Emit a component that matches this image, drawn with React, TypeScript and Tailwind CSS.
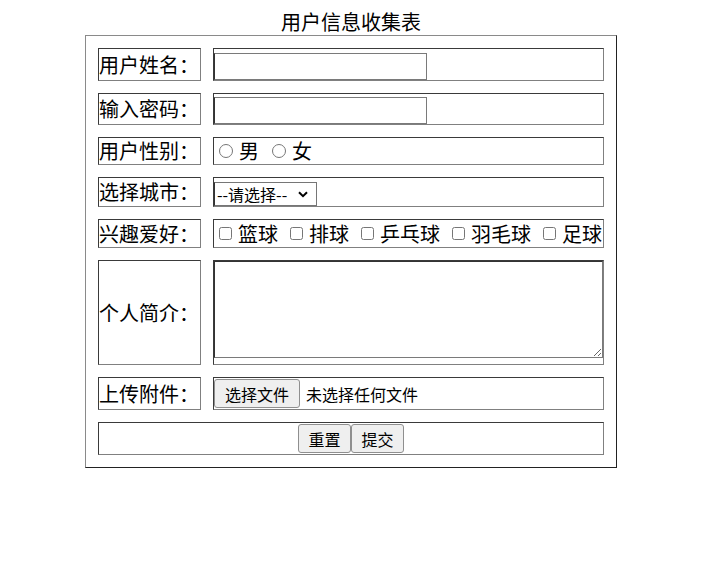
import { useState } from 'react';

const cell =
  'border border-t-[#3a3a3a] border-l-[#3a3a3a] border-r-[#808080] border-b-[#808080]';

const field =
  'border border-t-[#7a7a7a] border-l-[#333] border-r-[#7a7a7a] border-b-[#7a7a7a] outline-none';

const hobbies = ['篮球', '排球', '乒乓球', '羽毛球', '足球'];

function Label({ text }: { text: string }) {
  return <div className={`${cell} flex items-center text-[20px] leading-[26px]`}>{text}</div>;
}

export default function App() {
  const [city, setCity] = useState('');

  return (
    <div className="min-h-screen bg-white pt-2 text-black font-['Noto_Sans_CJK_SC','Microsoft_YaHei',sans-serif]">
      <div className="mx-auto w-[532px]">
        {/* caption */}
        <div className="h-[27px] text-center text-[20px] leading-[27px]">用户信息收集表</div>

        {/* the "table" */}
        <form className="grid grid-cols-[103px_391px] grid-rows-[33px_32px_28px_30px_29px_105px_33px_33px] gap-3 border border-t-[#8a8a8a] border-l-[#8a8a8a] border-r-[#222] border-b-[#222] p-3">
          <Label text="用户姓名：" />
          <div className={`${cell} flex items-end`}>
            <input type="text" className={`${field} h-[27px] w-[213px] px-1 text-[16px]`} />
          </div>

          <Label text="输入密码：" />
          <div className={`${cell} flex items-end`}>
            <input type="password" className={`${field} h-[27px] w-[213px] px-1 text-[16px]`} />
          </div>

          <Label text="用户性别：" />
          <div className={`${cell} flex items-center gap-[8px] text-[20px] leading-[26px]`}>
            {['男', '女'].map((s) => (
              <label key={s} className="flex items-center">
                <input type="radio" name="sex" className="ml-[5px] mr-[6px] h-[14px] w-[14px]" />
                {s}
              </label>
            ))}
          </div>

          <Label text="选择城市：" />
          <div className={`${cell} flex items-end`}>
            <div className="relative">
              <select
                value={city}
                onChange={(e) => setCity(e.target.value)}
                className="h-[24px] w-[103px] appearance-none border border-[#767676] border-l-[#333] bg-white pl-[2px] pr-[22px] text-[16px] leading-[20px] outline-none"
              >
                <option value="">--请选择--</option>
                <option value="bj">北京</option>
                <option value="sh">上海</option>
                <option value="gz">广州</option>
              </select>
              {/* dropdown chevron */}
              <svg
                className="pointer-events-none absolute right-[9px] top-[9px]"
                width="10"
                height="7"
                viewBox="0 0 10 7"
                fill="none"
              >
                <path d="M1 1.2 5 5.2 9 1.2" stroke="#000" strokeWidth="2" />
              </svg>
            </div>
          </div>

          <Label text="兴趣爱好：" />
          <div className={`${cell} flex items-center gap-[7px] text-[20px] leading-[26px] whitespace-nowrap`}>
            {hobbies.map((h) => (
              <label key={h} className="flex items-center">
                <input type="checkbox" className="ml-[5px] mr-[6px] h-[13px] w-[13px]" />
                {h}
              </label>
            ))}
          </div>

          <Label text="个人简介：" />
          <div className={`${cell} flex items-start`}>
            <textarea
              className={`${field} h-[97px] w-full border-t-[#333] border-r-[#6a6a6a] p-[2px] text-[16px]`}
            />
          </div>

          <Label text="上传附件：" />
          <div className={`${cell} flex items-center gap-[6px] text-[16px]`}>
            <button
              type="button"
              className="h-[29px] w-[86px] rounded-[3px] border border-[#8f8f8f] bg-[#efefef] text-[16px] leading-[20px]"
            >
              选择文件
            </button>
            <span>未选择任何文件</span>
          </div>

          <div className={`${cell} col-span-2 flex items-center justify-center`}>
            <button
              type="reset"
              className="h-[29px] w-[53px] rounded-[3px] border border-[#8f8f8f] bg-[#efefef] text-[16px] leading-[20px]"
            >
              重置
            </button>
            <button
              type="submit"
              className="h-[29px] w-[53px] rounded-[3px] border border-[#8f8f8f] bg-[#efefef] text-[16px] leading-[20px]"
            >
              提交
            </button>
          </div>
        </form>
      </div>
    </div>
  );
}
